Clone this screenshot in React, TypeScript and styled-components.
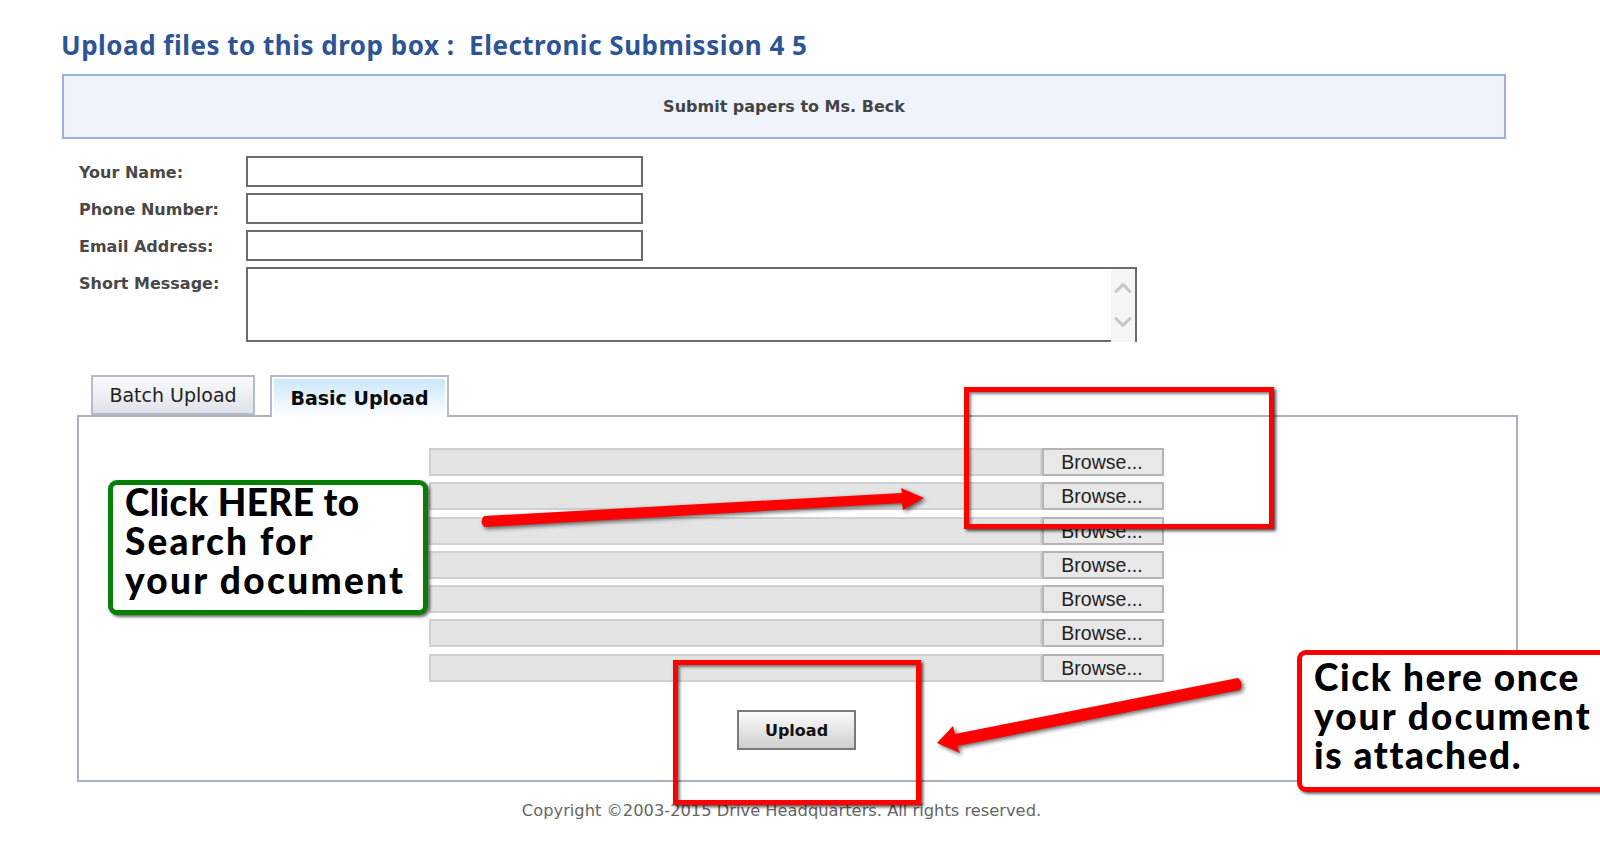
import React from "react";
import styled, { createGlobalStyle } from "styled-components";
import { ChevronDown, ChevronUp } from "lucide-react";

const GlobalStyle = createGlobalStyle`
  html, body {
    margin: 0;
    padding: 0;
    background: #fff;
    font-family: "DejaVu Sans", Verdana, sans-serif;
  }
`;

const Page = styled.div`
  position: relative;
  width: 1600px;
  height: 862px;
  overflow: hidden;
  padding: 30px 0 0 61px;
  box-sizing: border-box;
`;

const Heading = styled.h1`
  margin: 0 0 13px;
  font-size: 26px;
  line-height: 31px;
  font-weight: 700;
  letter-spacing: 0.5px;
  color: #2d5596;
  white-space: pre;
  font-family: "Noto Sans", sans-serif;
`;

const InfoBox = styled.div`
  width: 1444px;
  height: 65px;
  margin-left: 1px;
  box-sizing: border-box;
  border: 2px solid #9cb2da;
  background: #eff3fb;
  display: flex;
  align-items: center;
  justify-content: center;
  font-size: 16px;
  font-weight: 700;
  color: #444;
`;

const Form = styled.div`
  display: grid;
  grid-template-columns: 167px auto;
  row-gap: 6px;
  margin: 17px 0 0 18px;
  justify-content: start;
`;

const Label = styled.label`
  font-size: 16px;
  font-weight: 700;
  color: #484848;
  line-height: 30px;
  padding-top: 2px;
  margin-bottom: -1px;
`;

const TextInput = styled.input`
  display: block;
  width: 397px;
  height: 31px;
  box-sizing: border-box;
  border: 2px solid #6b6b6b;
  background: #fff;
  padding: 0 4px;
`;

const MessageBox = styled.div`
  display: flex;
  width: 891px;
  height: 75px;
  box-sizing: border-box;
  border: 2px solid #6b6b6b;
`;

const MessageInput = styled.textarea`
  flex: 1;
  border: 0;
  outline: 0;
  resize: none;
  overflow: hidden;
  background: #fff;
`;

const ScrollStrip = styled.div`
  width: 24px;
  margin-bottom: -2px;
  background: #f6f6f6;
  color: #c6c6c6;
  display: flex;
  flex-direction: column;
  align-items: center;
  padding-top: 5px;
  gap: 6px;
`;

const Tabs = styled.div`
  display: flex;
  gap: 15px;
  margin: 33px 0 0 30px;
  position: relative;
  z-index: 1;
`;

const Tab = styled.div<{ $active?: boolean }>`
  box-sizing: border-box;
  height: ${(p) => (p.$active ? "42px" : "40px")};
  margin-bottom: ${(p) => (p.$active ? "-2px" : "0")};
  width: ${(p) => (p.$active ? "179px" : "164px")};
  border: 2px solid #b4bcc8;
  border-bottom: ${(p) => (p.$active ? "0" : "2px solid #b4bcc8")};
  background: ${(p) =>
    p.$active
      ? "linear-gradient(#c9e6f9, #ffffff)"
      : "linear-gradient(#fbfbfc, #dfe2e8)"};
  box-shadow: ${(p) => (p.$active ? "inset 0 0 0 2px #fff" : "none")};
  color: ${(p) => (p.$active ? "#0a0a0a" : "#222")};
  font-size: 19px;
  font-weight: ${(p) => (p.$active ? 700 : 400)};
  display: flex;
  align-items: center;
  justify-content: center;
  padding-top: ${(p) => (p.$active ? "2px" : "0")};
`;

const Panel = styled.div`
  box-sizing: border-box;
  width: 1441px;
  height: 367px;
  margin-left: 16px;
  border: 2px solid #a9b3c0;
  padding: 31px 0 0 350px;
`;

const FileRows = styled.div`
  display: flex;
  flex-direction: column;
  gap: 6.3px;
`;

const FileRow = styled.div`
  display: flex;
  height: 28px;
`;

const FilePath = styled.div`
  width: 613px;
  box-sizing: border-box;
  background: #e4e4e4;
  border: 2px solid #d0d0d0;
`;

const BrowseButton = styled.button`
  width: 122px;
  box-sizing: border-box;
  padding: 1px 2px 0 0;
  background: #e8e8e8;
  border: 2px solid #b4b4b4;
  font-family: "Liberation Sans", Arial, sans-serif;
  font-size: 19.5px;
  color: #222;
`;

const UploadRow = styled.div`
  display: flex;
  justify-content: flex-start;
  margin: 28px 0 0 308px;
`;

const UploadButton = styled.button`
  width: 119px;
  height: 40px;
  box-sizing: border-box;
  border: 2px solid #7a7a7a;
  background: linear-gradient(#fbfbfb, #cfcfcf);
  font-family: "DejaVu Sans", sans-serif;
  font-size: 16px;
  font-weight: 700;
  color: #111;
  padding: 1px 0 0;
`;

const Copyright = styled.div`
  width: 1441px;
  text-align: center;
  margin-top: 18px;
  font-size: 16.3px;
  line-height: 22px;
  color: #666;
`;

const HighlightBox = styled.div<{ $left: number; $top: number; $width: number; $height: number }>`
  position: absolute;
  left: ${(p) => p.$left}px;
  top: ${(p) => p.$top}px;
  width: ${(p) => p.$width}px;
  height: ${(p) => p.$height}px;
  box-sizing: border-box;
  border: 5px solid #fe0000;
  box-shadow: 2px 2px 3px rgba(0, 0, 0, 0.7), inset 2px 2px 3px rgba(0, 0, 0, 0.5);
`;

const Callout = styled.div<{
  $color: string;
  $left: number;
  $top: number;
  $width: number;
  $height: number;
}>`
  position: absolute;
  left: ${(p) => p.$left}px;
  top: ${(p) => p.$top}px;
  width: ${(p) => p.$width}px;
  height: ${(p) => p.$height}px;
  box-sizing: border-box;
  background: #fff;
  border: 5px solid ${(p) => p.$color};
  border-radius: 9px;
  box-shadow: 2px 2px 3px rgba(0, 0, 0, 0.6);
  padding-left: 12px;
  overflow: hidden;
`;

const CalloutBody = styled.div<{ $offset: number }>`
  margin-top: ${(p) => p.$offset}px;
`;

const CalloutLine = styled.div<{ $spacing: number }>`
  height: 39px;
  font-family: Lato, "Liberation Sans", sans-serif;
  font-weight: 900;
  font-size: 37px;
  line-height: 39px;
  letter-spacing: ${(p) => p.$spacing}px;
  color: #000;
  white-space: pre;
`;

const ArrowLayer = styled.svg`
  position: absolute;
  left: 0;
  top: 0;
  width: 1600px;
  height: 862px;
  pointer-events: none;
  filter: drop-shadow(2px 2px 2px rgba(0, 0, 0, 0.6));
`;

const App = () => {
  const browseRows = [0, 1, 2, 3, 4, 5, 6];

  return (
    <Page>
      <GlobalStyle />
      <Heading>Upload files to this drop box :  Electronic Submission 4 5</Heading>
      <InfoBox>Submit papers to Ms. Beck</InfoBox>
      <Form>
        <Label>Your Name:</Label>
        <TextInput />
        <Label>Phone Number:</Label>
        <TextInput />
        <Label>Email Address:</Label>
        <TextInput />
        <Label>Short Message:</Label>
        <MessageBox>
          <MessageInput />
          <ScrollStrip>
            <ChevronUp size={28} strokeWidth={2.6} />
            <ChevronDown size={28} strokeWidth={2.6} />
          </ScrollStrip>
        </MessageBox>
      </Form>
      <Tabs>
        <Tab>Batch Upload</Tab>
        <Tab $active>Basic Upload</Tab>
      </Tabs>
      <Panel>
        <FileRows>
          {browseRows.map((row) => (
            <FileRow key={row}>
              <FilePath />
              <BrowseButton>Browse...</BrowseButton>
            </FileRow>
          ))}
        </FileRows>
        <UploadRow>
          <UploadButton>Upload</UploadButton>
        </UploadRow>
      </Panel>
      <Copyright>Copyright ©2003-2015 Drive Headquarters. All rights reserved.</Copyright>

      <HighlightBox $left={964} $top={387} $width={310} $height={142} />
      <HighlightBox $left={673} $top={660} $width={248} $height={145} />
      <Callout $color="#058005" $left={108} $top={480} $width={320} $height={135}>
        <CalloutBody $offset={-3}>
          <CalloutLine $spacing={0.4}>Click HERE to</CalloutLine>
          <CalloutLine $spacing={2.1}>Search for</CalloutLine>
          <CalloutLine $spacing={2.3}>your document</CalloutLine>
        </CalloutBody>
      </Callout>
      <Callout $color="#fe0000" $left={1297} $top={650} $width={320} $height={142}>
        <CalloutBody $offset={2}>
          <CalloutLine $spacing={1.6}>Cick here once</CalloutLine>
          <CalloutLine $spacing={2.1}>your document</CalloutLine>
          <CalloutLine $spacing={1.6}>is attached.</CalloutLine>
        </CalloutBody>
      </Callout>
      <ArrowLayer viewBox="0 0 1600 862">
        <path d="M484 516 L902 493 L901 488 L924 498 L903 510 L902 503 L484 527 Q479 522 484 516 Z" fill="#fe0000" />
        <path d="M1238 678 Q1244 683 1240 690 L957 746 L960 753 L937 743 L953 726 L955 734 Z" fill="#fe0000" />
      </ArrowLayer>
    </Page>
  );
};

export default App;
